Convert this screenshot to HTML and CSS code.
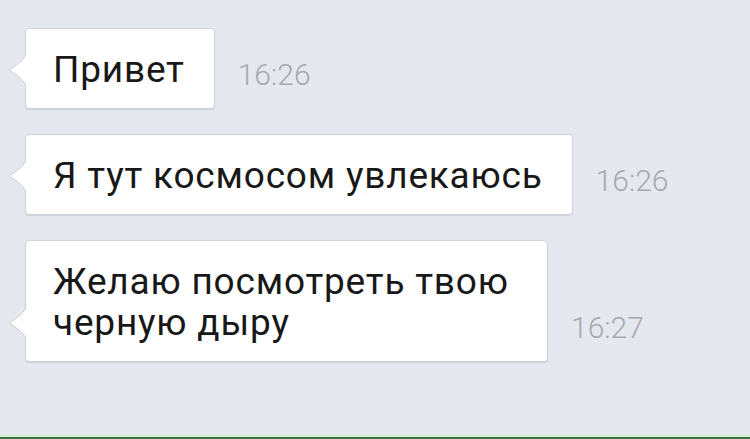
FILE: index.html
```html
<!DOCTYPE html>
<html lang="ru">
<head>
<meta charset="utf-8">
<title>Чат</title>
<link rel="stylesheet" href="styles.css">
</head>
<body>
<div class="screen">
  <div class="chat">
    <div class="row">
      <div class="bubble">
        <svg class="tail" width="18" height="32" viewBox="0 0 18 32"><path d="M18 0.5 C14 8 7 12 1.2 16 C7 20 14 24 18 31.5" fill="#fff" stroke="#c9ccd2" stroke-width="1"/></svg>
        <span class="text">Привет</span>
      </div>
      <span class="time">16:26</span>
    </div>
    <div class="row">
      <div class="bubble">
        <svg class="tail" width="18" height="32" viewBox="0 0 18 32"><path d="M18 0.5 C14 8 7 12 1.2 16 C7 20 14 24 18 31.5" fill="#fff" stroke="#c9ccd2" stroke-width="1"/></svg>
        <span class="text">Я тут космосом увлекаюсь</span>
      </div>
      <span class="time">16:26</span>
    </div>
    <div class="row">
      <div class="bubble bubble--wide">
        <svg class="tail" width="18" height="32" viewBox="0 0 18 32"><path d="M18 0.5 C14 8 7 12 1.2 16 C7 20 14 24 18 31.5" fill="#fff" stroke="#c9ccd2" stroke-width="1"/></svg>
        <span class="text">Желаю посмотреть твою черную дыру</span>
      </div>
      <span class="time">16:27</span>
    </div>
  </div>
  <div class="footer"></div>
</div>
</body>
</html>
```

FILE: styles.css
```css
html, body {
  margin: 0;
  padding: 0;
}
body {
  background: #e5e8ef;
  font-family: Roboto, "Noto Sans", "DejaVu Sans", sans-serif;
}
.screen {
  display: flex;
  flex-direction: column;
  height: 439px;
  overflow: hidden;
}
.chat {
  display: flex;
  flex-direction: column;
  gap: 25px;
  padding: 28px 0 0 25px;
}
.row {
  display: flex;
  align-items: flex-end;
  gap: 23px;
}
.bubble {
  position: relative;
  box-sizing: border-box;
  background: #ffffff;
  border: 1px solid #d0d3d9;
  border-radius: 4px;
  box-shadow: 0 1px 1px rgba(0, 0, 0, 0.10);
  padding: 20px 29px 18px 27px;
  font-size: 37px;
  line-height: 41px;
  letter-spacing: 0.8px;
  color: #181818;
}
.bubble--wide {
  width: 523px;
}
.tail {
  position: absolute;
  left: -18px;
  bottom: 22px;
  display: block;
}
.time {
  font-size: 30px;
  font-weight: 300;
  line-height: 30px;
  color: #a6a9af;
  margin-bottom: 19px;
}
.footer {
  margin-top: auto;
  height: 2px;
  background: #d3f0d3;
  border-bottom: 2px solid #3f6f47;
}
```
